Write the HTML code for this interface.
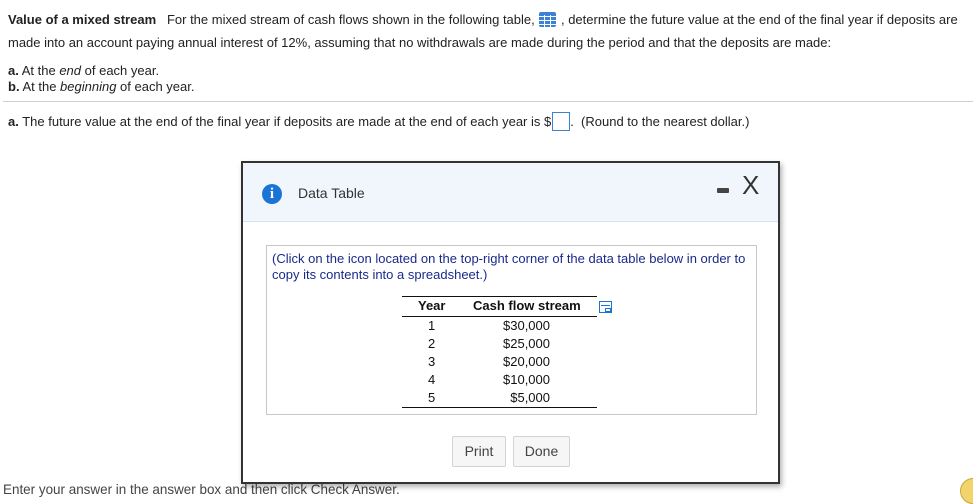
<!DOCTYPE html>
<html><head><meta charset="utf-8"><style>
*{margin:0;padding:0;box-sizing:border-box}
body{width:973px;height:495px;overflow:hidden;background:#fff;font-family:"Liberation Sans",Arial,sans-serif;font-size:13px;color:#222;position:relative}
.abs{position:absolute;white-space:nowrap}
b{font-weight:bold}
.grid{display:inline-block;width:17px;height:15px;background:#3b82d6;border-radius:2px;vertical-align:-3px;position:relative;margin:0 1px}
.grid i{position:absolute;background:#fff}
</style></head><body>
<div class="abs" style="left:8px;top:12px"><b>Value of a mixed stream</b>&nbsp;&nbsp;&nbsp;For the mixed stream of cash flows shown in the following table, <span class="grid"><i style="left:0;top:4px;width:17px;height:1px"></i><i style="left:0;top:8px;width:17px;height:1px"></i><i style="left:0;top:12px;width:17px;height:1px"></i><i style="left:5px;top:3px;width:1px;height:12px"></i><i style="left:11px;top:3px;width:1px;height:12px"></i></span> , determine the future value at the end of the final year if deposits are</div>
<div class="abs" style="left:8px;top:35px">made into an account paying annual interest of 12%, assuming that no withdrawals are made during the period and that the deposits are made:</div>
<div class="abs" style="left:8px;top:63px"><b>a.</b> At the <i>end</i> of each year.</div>
<div class="abs" style="left:8px;top:79px"><b>b.</b> At the <i>beginning</i> of each year.</div>
<div class="abs" style="left:3px;top:101px;width:970px;height:1px;background:#d0d0d0"></div>
<div class="abs" style="left:8px;top:112px"><b>a.</b> The future value at the end of the final year if deposits are made at the end of each year is $<span style="display:inline-block;width:18px;height:19px;border:1px solid #3b82d6;vertical-align:-5px;margin-left:1px"></span>.&nbsp; (Round to the nearest dollar.)</div>
<div class="abs" style="left:3px;top:481px;font-size:14px;color:#444;transform:scaleX(0.96);transform-origin:left">Enter your answer in the answer box and then click Check Answer.</div>
<div class="abs" style="left:960px;top:478px;width:26px;height:26px;border-radius:50%;background:#f3d36b;border:1px solid #c9a93c"></div>

<div class="abs" style="left:241px;top:161px;width:539px;height:323px;border:2px solid #333;background:#fff;box-shadow:2px 3px 5px rgba(0,0,0,.3)">
 <div style="position:absolute;left:0;top:0;width:535px;height:59px;background:#f1f6fd;border-bottom:1px solid #d3e3f2"></div>
 <div style="position:absolute;left:19px;top:21px;width:20px;height:20px;border-radius:50%;background:#1a73d6;color:#fff;font:bold 15px 'Liberation Serif',serif;text-align:center;line-height:20px">i</div>
 <div style="position:absolute;left:55px;top:22px;font-size:14px;color:#333">Data Table</div>
 <div style="position:absolute;left:474px;top:25px;width:12px;height:5px;background:#444;border-radius:1px"></div>
 <div style="position:absolute;left:499px;top:7px;font-size:26px;color:#333;line-height:30px">X</div>
 <div style="position:absolute;left:23px;top:82px;width:491px;height:170px;border:1px solid #c8c8c8"></div>
 <div style="position:absolute;left:29px;top:88px;color:#1a2a8a;line-height:16px;font-size:13px">(Click on the icon located on the top-right corner of the data table below in order to<br>copy its contents into a spreadsheet.)</div>
 <div style="position:absolute;left:159px;top:133px;width:195px;height:1px;background:#111"></div>
 <div style="position:absolute;left:159px;top:153px;width:195px;height:1px;background:#111"></div>
 <div style="position:absolute;left:159px;top:244px;width:195px;height:1px;background:#111"></div>
 <div style="position:absolute;left:175px;top:135px;font-weight:bold;color:#111">Year</div>
 <div style="position:absolute;left:230px;top:135px;font-weight:bold;color:#111">Cash flow stream</div>
 <div style="position:absolute;left:356px;top:138px;width:13px;height:12px;border:1px solid #1a73d6"><div style="position:absolute;left:1px;top:3px;width:9px;height:1px;background:#1a73d6"></div><div style="position:absolute;left:5px;top:6px;width:6px;height:4px;border:1px solid #1a73d6"></div></div>
 <div style="position:absolute;left:185px;top:154px;line-height:18px;color:#111;text-align:center">1<br>2<br>3<br>4<br>5</div>
 <div style="position:absolute;left:238px;top:154px;width:69px;line-height:18px;color:#111;text-align:right">$30,000<br>$25,000<br>$20,000<br>$10,000<br>$5,000</div>
 <div style="position:absolute;left:209px;top:273px;width:54px;height:31px;border:1px solid #d3d3d3;border-radius:2px;background:#f6f6f6;text-align:center;line-height:29px;font-size:14px;color:#444">Print</div>
 <div style="position:absolute;left:270px;top:273px;width:57px;height:31px;border:1px solid #d3d3d3;border-radius:2px;background:#f6f6f6;text-align:center;line-height:29px;font-size:14px;color:#444">Done</div>
</div>
</body></html>
